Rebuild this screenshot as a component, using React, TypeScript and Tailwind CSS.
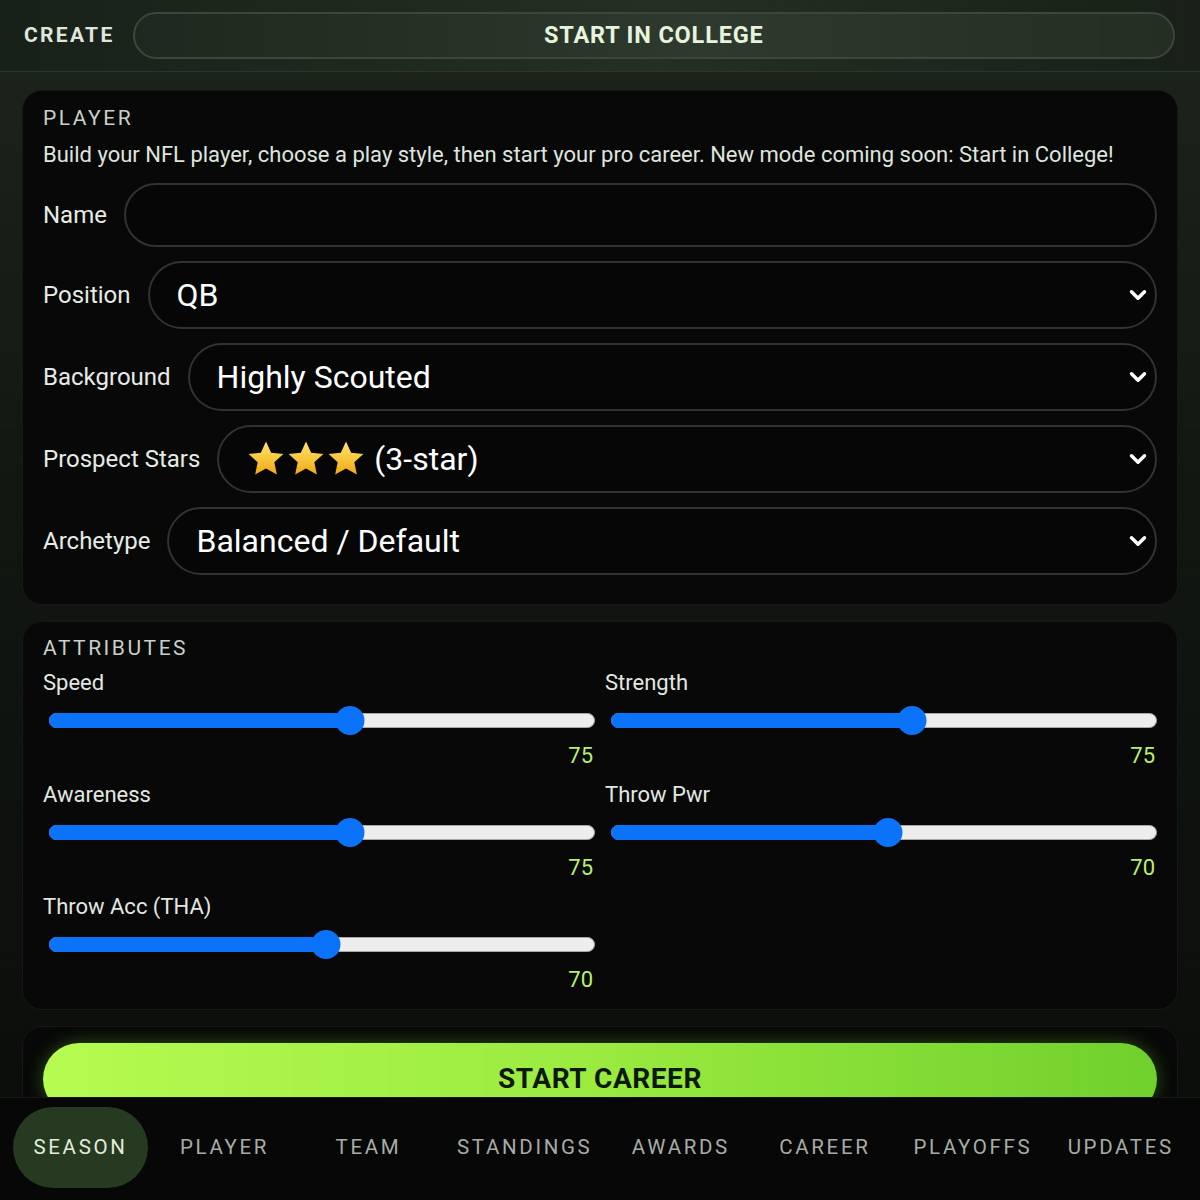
import { ChevronDown } from 'lucide-react';

const attrs = [
  { label: 'Speed', value: 75, pos: 0.552 },
  { label: 'Strength', value: 75, pos: 0.552 },
  { label: 'Awareness', value: 75, pos: 0.552 },
  { label: 'Throw Pwr', value: 70, pos: 0.508 },
  { label: 'Throw Acc (THA)', value: 70, pos: 0.508 },
];

const tabs = ['SEASON', 'PLAYER', 'TEAM', 'STANDINGS', 'AWARDS', 'CAREER', 'PLAYOFFS', 'UPDATES'];

function Star() {
  return (
    <svg width="40" height="40" viewBox="0 0 24 24">
      <defs>
        <linearGradient id="starG" x1="0" y1="0" x2="0" y2="1">
          <stop offset="0" stopColor="#ffe66e" />
          <stop offset="1" stopColor="#f0a912" />
        </linearGradient>
      </defs>
      <path
        d="M12 1.5l3.1 6.7 7.3.8-5.4 5 1.5 7.3L12 17.7l-6.5 3.6 1.5-7.3-5.4-5 7.3-.8z"
        fill="url(#starG)"
      />
    </svg>
  );
}

function SelectRow({ label, children }: { label: string; children: React.ReactNode }) {
  return (
    <div className="flex items-center gap-[17px]">
      <span className="text-[24px] leading-[28px] text-[#e6ebe6] whitespace-nowrap">{label}</span>
      <div className="flex-1 h-[68px] rounded-full border-2 border-[#2f342f] bg-[#050605] flex items-center pl-[27px] pr-[4px]">
        <div className="flex-1 flex items-center text-[32px] leading-[36px] text-white">{children}</div>
        <ChevronDown size={26} strokeWidth={3.2} color="#ffffff" />
      </div>
    </div>
  );
}

function Slider({ label, value, pos }: { label: string; value: number; pos: number }) {
  return (
    <div className="flex flex-col">
      <span className="text-[22px] leading-[26px] text-[#e2e7e2]">{label}</span>
      <div className="relative ml-[6px] mt-[9px] h-[30px] flex items-center">
        <div className="relative w-full h-[15px] rounded-full bg-[#ededed] border border-[#a8a8a8]">
          <div
            className="absolute left-[-1px] top-[-1px] h-[15px] rounded-l-full bg-[#0b72fa]"
            style={{ width: `${pos * 100}%` }}
          />
        </div>
        <div
          className="absolute w-[29px] h-[29px] rounded-full bg-[#0b72fa] -translate-x-1/2"
          style={{ left: `${pos * 100}%` }}
        />
      </div>
      <span className="self-end mt-[8px] text-[22px] leading-[26px] text-[#b9f06c] pr-[2px]">{value}</span>
    </div>
  );
}

export default function App() {
  return (
    <div
      className="h-[1200px] flex flex-col overflow-hidden bg-[linear-gradient(180deg,#1c251c_0%,#121712_40%,#0a0c0a_100%)]"
      style={{ fontFamily: 'Roboto, "Liberation Sans", sans-serif' }}
    >
      <header className="h-[72px] shrink-0 flex items-center gap-[18px] pl-[24px] pr-[25px] border-b border-[#2d362d] bg-[linear-gradient(90deg,#182118_0%,#243024_55%,#182018_100%)]">
        <span className="text-[21px] font-bold tracking-[0.11em] text-[#dfe6dd]">CREATE</span>
        <div className="flex-1 h-[47px] rounded-full border-2 border-[#3b473a] bg-[linear-gradient(90deg,#1e281e_0%,#2e3a2d_55%,#242e23_100%)] flex items-center justify-center">
          <span className="text-[23.5px] font-bold tracking-[0.035em] text-[#e6f4de]">START IN COLLEGE</span>
        </div>
      </header>

      <main className="flex-1 min-h-0 overflow-hidden px-[22px] pt-[18px] flex flex-col gap-[16px]">
        <section className="rounded-[20px] bg-[#070807] border border-[#151815] px-[20px] pt-[14px] pb-[29px]">
          <h2 className="text-[21px] leading-[26px] tracking-[0.12em] text-[#c9d0c9]">PLAYER</h2>
          <p className="mt-[10px] text-[22px] leading-[28px] text-[#dfe4df]">
            Build your NFL player, choose a play style, then start your pro career. New mode coming soon: Start in College!
          </p>
          <div className="mt-[14px] flex flex-col gap-[14px]">
            <div className="flex items-center gap-[17px]">
              <span className="text-[24px] leading-[28px] text-[#e6ebe6]">Name</span>
              <div className="flex-1 h-[64px] rounded-full border-2 border-[#2f342f] bg-[#050605]" />
            </div>
            <SelectRow label="Position">QB</SelectRow>
            <SelectRow label="Background">Highly Scouted</SelectRow>
            <SelectRow label="Prospect Stars">
              <span className="flex items-center mr-[8px]">
                <Star />
                <Star />
                <Star />
              </span>
              (3-star)
            </SelectRow>
            <SelectRow label="Archetype">Balanced / Default</SelectRow>
          </div>
        </section>

        <section className="rounded-[20px] bg-[#070807] border border-[#151815] px-[20px] pt-[13px] pb-[16px]">
          <h2 className="text-[21px] leading-[26px] tracking-[0.12em] text-[#c9d0c9]">ATTRIBUTES</h2>
          <div className="mt-[9px] grid grid-cols-2 gap-x-[10px] gap-y-[13px]">
            {attrs.map((a) => (
              <Slider key={a.label} {...a} />
            ))}
          </div>
        </section>

        <section className="rounded-[20px] bg-[#070807] border border-[#151815] px-[20px] pt-[16px] pb-[20px]">
          <button className="w-full h-[72px] rounded-full bg-[linear-gradient(90deg,#b6fb50_0%,#9aea3f_50%,#70d02c_100%)] shadow-[0_0_18px_rgba(120,210,50,0.35)] flex items-center justify-center">
            <span className="text-[28px] leading-[32px] font-bold tracking-[0.02em] text-[#0c1907]">START CAREER</span>
          </button>
        </section>
      </main>

      <nav className="h-[103px] shrink-0 bg-[#060706] border-t border-[#141714] pl-[13px] pt-[9px] flex gap-[9px] overflow-hidden">
        {tabs.map((t, i) => (
          <div
            key={t}
            className={
              i === 0
                ? 'min-w-[135px] h-[81px] px-3 rounded-full bg-[#253a20] flex items-center justify-center text-[20.5px] tracking-[0.13em] text-[#e3ebdf]'
                : 'min-w-[135px] h-[81px] px-3 rounded-full flex items-center justify-center text-[20.5px] tracking-[0.13em] text-[#a7aca7]'
            }
          >
            {t}
          </div>
        ))}
      </nav>
    </div>
  );
}
